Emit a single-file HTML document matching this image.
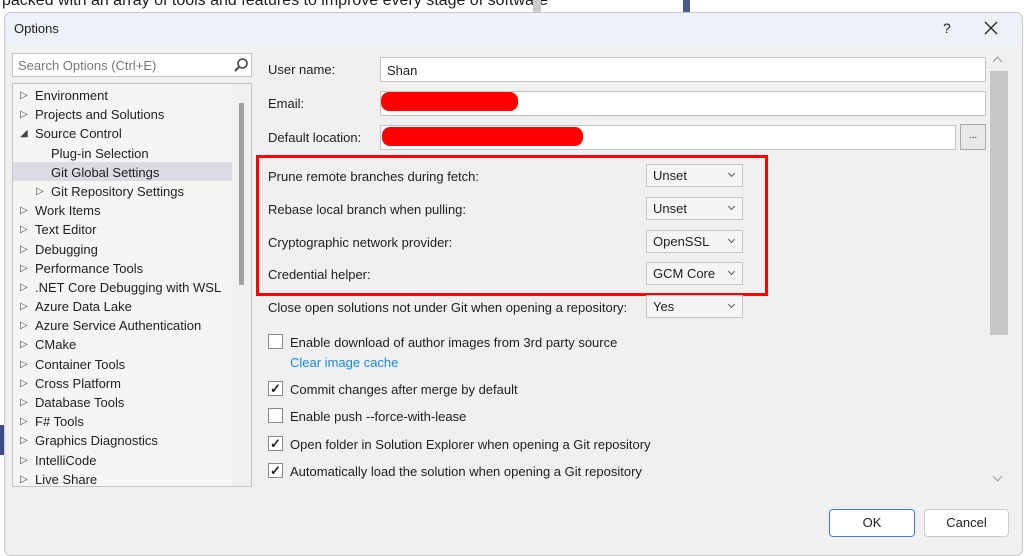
<!DOCTYPE html><html><head><style>
body{margin:0;width:1024px;height:556px;overflow:hidden;background:#fff;font-family:"Liberation Sans",sans-serif;font-size:13px;color:#1e1e1e;position:relative}
.a{position:absolute}
.dlg{left:4px;top:12px;width:1017px;height:542px;background:#f0f0f0;border:1px solid #c8c8c8;border-radius:7px;overflow:hidden}
.tb{left:0;top:0;width:100%;height:32px;background:#eef1f7}
.inp{background:#fff;border:1px solid #c4c4c4;box-sizing:border-box}
.dd{left:646px;width:97px;height:23px;background:#f5f5f5;border:1px solid #c6c6c6;box-sizing:border-box;padding:3px 6px}
.dd::after{content:"";position:absolute;right:8px;top:6px;width:4px;height:4px;border-right:1px solid #555;border-bottom:1px solid #555;transform:rotate(45deg)}
.cb{left:268px;width:15px;height:15px;background:#fff;border:1px solid #888;box-sizing:border-box;font-size:13px;line-height:13px;text-align:center;font-weight:bold}
.tree div{height:19.2px;line-height:19.2px;white-space:nowrap;position:relative;padding-left:15px}
.tree div i{position:absolute;left:0;top:0;font-style:normal;font-size:10px;color:#444;line-height:19px}
.btn{height:28px;background:#fff;border:1px solid #ccc;border-radius:4px;box-sizing:border-box;text-align:center;line-height:26px;font-size:13px}
</style></head><body>
<div class="a" style="left:2px;top:-8px;font-size:16px;white-space:nowrap">packed with an array of tools and features to improve every stage of software</div>
<div class="a" style="left:533px;top:0;width:8px;height:12px;background:#ccc"></div>
<div class="a" style="left:683px;top:0;width:7px;height:12px;background:#4b5a8c"></div>
<div class="a" style="left:0;top:425px;width:4px;height:30px;background:#3a4d86"></div>
<div class="a dlg">
 <div class="a tb"></div>
 <div class="a" style="left:9px;top:8px;font-size:13px">Options</div>
 <div class="a" style="left:938px;top:7px;font-size:14px">?</div>
 <svg class="a" style="left:979px;top:8px" width="14" height="14"><path d="M1 1L13 13M13 1L1 13" stroke="#222" stroke-width="1.3"/></svg>
</div>
<div class="a inp" style="left:12px;top:53px;width:240px;height:24px;padding:4px 5px;color:#777">Search Options (Ctrl+E)</div>
<svg class="a" style="left:233px;top:57px" width="16" height="16"><circle cx="9.5" cy="6.5" r="4.5" fill="none" stroke="#444" stroke-width="1.6"/><line x1="6.3" y1="9.7" x2="2" y2="14" stroke="#444" stroke-width="2"/></svg>
<div class="a" style="left:12px;top:83px;width:240px;height:404px;background:#f5f5f5;border:1px solid #c4c4c4;box-sizing:border-box;overflow:hidden">
 <div class="a" style="left:0;top:78px;width:219px;height:19px;background:#dadbe3"></div>
 <div class="a" style="left:219px;top:0;width:19px;height:402px;background:#f0f0f0"></div>
 <div class="a" style="left:226px;top:19px;width:5px;height:182px;background:#a0a0a0"></div>
 <div class="a tree" style="left:7px;top:2px;width:210px;height:400px;overflow:hidden">
<div><i>▷</i>Environment</div>
<div><i>▷</i>Projects and Solutions</div>
<div><i>◢</i>Source Control</div>
<div style="padding-left:31px">Plug-in Selection</div>
<div style="padding-left:31px">Git Global Settings</div>
<div style="padding-left:31px"><i style="left:16px">▷</i>Git Repository Settings</div>
<div><i>▷</i>Work Items</div>
<div><i>▷</i>Text Editor</div>
<div><i>▷</i>Debugging</div>
<div><i>▷</i>Performance Tools</div>
<div><i>▷</i>.NET Core Debugging with WSL</div>
<div><i>▷</i>Azure Data Lake</div>
<div><i>▷</i>Azure Service Authentication</div>
<div><i>▷</i>CMake</div>
<div><i>▷</i>Container Tools</div>
<div><i>▷</i>Cross Platform</div>
<div><i>▷</i>Database Tools</div>
<div><i>▷</i>F# Tools</div>
<div><i>▷</i>Graphics Diagnostics</div>
<div><i>▷</i>IntelliCode</div>
<div><i>▷</i>Live Share</div>
 </div>
</div>
<div class="a" style="left:268px;top:62px">User name:</div>
<div class="a" style="left:268px;top:96px">Email:</div>
<div class="a" style="left:268px;top:130px">Default location:</div>
<div class="a inp" style="left:380px;top:57px;width:606px;height:25px;padding:5px 6px">Shan</div>
<div class="a inp" style="left:380px;top:91px;width:606px;height:25px"></div>
<div class="a inp" style="left:380px;top:125px;width:576px;height:25px"></div>
<div class="a" style="left:381px;top:92px;width:137px;height:19px;background:#f00;border-radius:8px"></div>
<div class="a" style="left:382px;top:127px;width:201px;height:19px;background:#f00;border-radius:8px"></div>
<div class="a" style="left:960px;top:124px;width:26px;height:26px;background:#e8e8e8;border:1px solid #aaa;box-sizing:border-box;text-align:center;font-size:10px;line-height:22px">...</div>
<div class="a" style="left:256px;top:155px;width:512px;height:141px;border:3px solid #f00;box-sizing:border-box"></div>
<div class="a" style="left:268px;top:169px">Prune remote branches during fetch:</div>
<div class="a" style="left:268px;top:202px">Rebase local branch when pulling:</div>
<div class="a" style="left:268px;top:235px">Cryptographic network provider:</div>
<div class="a" style="left:268px;top:267px">Credential helper:</div>
<div class="a" style="left:268px;top:300px">Close open solutions not under Git when opening a repository:</div>
<div class="a dd" style="top:164px">Unset</div>
<div class="a dd" style="top:197px">Unset</div>
<div class="a dd" style="top:230px">OpenSSL</div>
<div class="a dd" style="top:262px">GCM Core</div>
<div class="a dd" style="top:295px">Yes</div>
<div class="a" style="left:990px;top:71px;width:18px;height:264px;background:#c6c6c6"></div>
<div class="a" style="left:994px;top:58px;width:6px;height:6px;border-left:1px solid #999;border-top:1px solid #999;transform:rotate(45deg)"></div>
<div class="a" style="left:994px;top:473px;width:6px;height:6px;border-right:1px solid #999;border-bottom:1px solid #999;transform:rotate(45deg)"></div>
<div class="a cb" style="top:334px"></div><div class="a" style="left:290px;top:335px">Enable download of author images from 3rd party source</div>
<div class="a" style="left:290px;top:355px;color:#1a8ae6">Clear image cache</div>
<div class="a cb" style="top:381px">✓</div><div class="a" style="left:290px;top:382px">Commit changes after merge by default</div>
<div class="a cb" style="top:408px"></div><div class="a" style="left:290px;top:409px">Enable push --force-with-lease</div>
<div class="a cb" style="top:436px">✓</div><div class="a" style="left:290px;top:437px">Open folder in Solution Explorer when opening a Git repository</div>
<div class="a cb" style="top:463px">✓</div><div class="a" style="left:290px;top:464px">Automatically load the solution when opening a Git repository</div>
<div class="a btn" style="left:829px;top:509px;width:86px;border-color:#3b82d6">OK</div>
<div class="a btn" style="left:924px;top:509px;width:85px">Cancel</div>
</body></html>
